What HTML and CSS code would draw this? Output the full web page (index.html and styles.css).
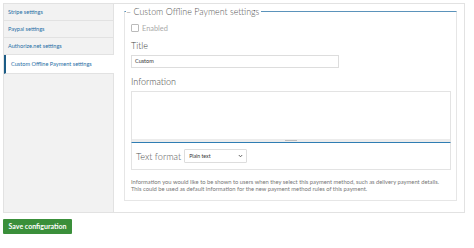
FILE: index.html
```html
<!DOCTYPE html>
<html>
<head>
<meta charset="utf-8">
<link rel="stylesheet" href="styles.css">
</head>
<body>
<div class="vtabs">
  <ul class="tabs-nav">
    <li class="tab">Stripe settings</li>
    <li class="tab">Paypal settings</li>
    <li class="tab">Authorize.net settings</li>
    <li class="tab active">Custom Offline Payment settings</li>
  </ul>
  <div class="pane">
    <fieldset class="group">
      <legend class="group-title">– Custom Offline Payment settings</legend>
      <label class="check"><span class="box"></span>Enabled</label>
      <div class="label">Title</div>
      <div class="input">Custom</div>
      <div class="label">Information</div>
      <div class="textarea">
        <div class="area"></div>
        <div class="grip"><span class="grip-bar"></span></div>
      </div>
      <div class="format">
        <span class="format-label">Text format</span>
        <span class="select">Plain text
          <svg class="chev" width="5" height="4" viewBox="0 0 5 4"><path d="M0.8 1 L2.5 2.8 L4.2 1" fill="none" stroke="#444" stroke-width="0.8"/></svg>
        </span>
      </div>
      <p class="desc">Information you would like to be shown to users when they select this payment method, such as delivery payment details.<br>This could be used as default information for the new payment method rules of this payment.</p>
    </fieldset>
  </div>
</div>
<button class="save">Save configuration</button>
</body>
</html>
```
FILE: styles.css
```css
* { box-sizing: border-box; }
html, body { margin: 0; padding: 0; background: #fff; }
body { padding: 3px; font-family: Lato, "Open Sans", sans-serif; color: #555; }
.vtabs {
  display: flex;
  width: 462px;
  height: 210px;
  border: 1px solid #e2e2e2;
}
.tabs-nav {
  list-style: none;
  margin: 0;
  padding: 0;
  width: 110px;
  background: #f2f2f2;
  border-right: 1px solid #e2e2e2;
}
.tab {
  height: 17px;
  line-height: 16px;
  padding-left: 4px;
  font-size: 5.6px;
  color: #1f6ea5;
  border-bottom: 1px solid #e2e2e2;
}
.tab.active {
  height: 19px;
  line-height: 18px;
  background: #fff;
  border-left: 2px solid #1c5c86;
  padding-left: 5px;
  margin-right: -1px;
  position: relative;
}
.pane {
  flex: 1;
  padding: 2px 7px 12px 10px;
}
.group {
  margin: 0;
  padding: 0 5px 8px 6px;
  border: 1px solid #e6e6e6;
  border-top: 1px solid #5b93bb;
  height: 195px;
}
.group-title {
  margin-left: -5px;
  padding: 0 2px 0 0;
  font-size: 8.9px;
  line-height: 11px;
  font-weight: 300;
  color: #555;
}
.check {
  display: flex;
  align-items: center;
  gap: 3px;
  margin-top: 7px;
  font-size: 7.4px;
  color: #aaa;
  height: 8px;
}
.box {
  width: 8px;
  height: 8px;
  border: 1px solid #bbb;
  border-radius: 1px;
  background: #fff;
}
.label {
  font-size: 9px;
  line-height: 11px;
  font-weight: 300;
  color: #444;
  margin-top: 8px;
  margin-bottom: 4px;
}
.input {
  width: 208px;
  height: 13px;
  border: 1px solid #ddd;
  font-size: 5.5px;
  line-height: 11px;
  padding-left: 3px;
  color: #333;
}
.textarea {
  width: 320px;
  border: 1px solid #e3e3e3;
  border-bottom: 1px solid #2f7db3;
}
.area { height: 47px; background: #fff; position: relative; }
.grip {
  height: 3px;
  background: #ececec;
  display: flex;
  justify-content: center;
  align-items: center;
}
.grip-bar { width: 12px; height: 1px; background: #bdbdbd; }
.format {
  width: 320px;
  height: 27px;
  border: 1px solid #e3e3e3;
  border-top: none;
  display: flex;
  align-items: center;
  padding-left: 4px;
  gap: 3px;
}
.format-label { font-size: 9.2px; font-weight: 300; color: #555; }
.select {
  width: 63px;
  height: 14px;
  border: 1px solid #ddd;
  font-size: 5.2px;
  color: #333;
  display: flex;
  align-items: center;
  justify-content: space-between;
  padding: 0 3px 0 4px;
  border-radius: 1px;
}
.desc {
  margin: 8px 0 0;
  font-size: 5.8px;
  line-height: 7px;
  color: #777;
}
.save {
  margin-top: 3px;
  width: 69px;
  height: 15px;
  border: none;
  border-radius: 1px;
  background: #3a8f3a;
  color: #fff;
  font-family: Lato, sans-serif;
  font-weight: bold;
  font-size: 7px;
  padding: 0;
}
```
